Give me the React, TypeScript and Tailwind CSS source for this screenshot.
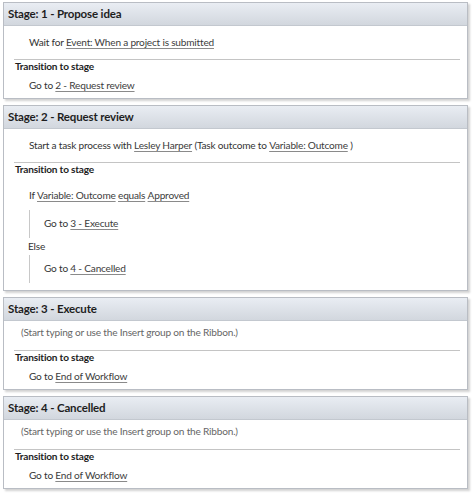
import type { ReactNode } from 'react'

const font = { fontFamily: 'Lato, "Open Sans", Arial, sans-serif' }

function Link({ children }: { children: ReactNode }) {
  return <span className="underline decoration-[#8a8a8a] underline-offset-2 text-[#3c3c3c]">{children}</span>
}

function Card({ title, children }: { title: string; children: ReactNode }) {
  return (
    <div className="w-[465px] border border-[#b9bdc4] bg-white shadow-[2px_2px_2px_rgba(0,0,0,0.18)]">
      <div className="h-[23px] border-b border-[#c3c8cf] bg-gradient-to-b from-[#e9edf3] to-[#d2d7de] flex items-center pl-[4px] text-[11.5px] tracking-[-0.15px] font-bold text-[#1e1e1e]">
        {title}
      </div>
      {children}
    </div>
  )
}

function Divider() {
  return <div className="ml-[10px] mr-[7px] h-px bg-[#c4c4c4]" />
}

function TransitionLabel() {
  return (
    <div className="h-[14px] flex items-center pl-[11px] font-bold text-[#1e1e1e]">
      Transition to stage
    </div>
  )
}

function GoTo({ target }: { target: string }) {
  return (
    <div className="h-[24px] flex items-center pl-[25px]">
      Go to&nbsp;<Link>{target}</Link>
    </div>
  )
}

function Placeholder() {
  return (
    <>
      <div className="h-[24px] flex items-center pl-[17px] text-[#666]">
        (Start typing or use the Insert group on the Ribbon.)
      </div>
      <div className="h-[5px]" />
    </>
  )
}

export default function App() {
  return (
    <div className="min-h-screen bg-white pt-[2px] pl-[3px] text-[10.1px] tracking-[-0.2px] text-[#333]" style={font}>
      <div className="flex flex-col gap-[6px]">
        <Card title="Stage: 1 - Propose idea">
          <div className="h-[33px] flex items-center pl-[25px]">
            Wait for&nbsp;<Link>Event: When a project is submitted</Link>
          </div>
          <Divider />
          <TransitionLabel />
          <GoTo target="2 - Request review" />
        </Card>

        <Card title="Stage: 2 - Request review">
          <div className="h-[33px] flex items-center pl-[25px]">
            Start a task process with&nbsp;<Link>Lesley Harper</Link>&nbsp;(Task outcome to&nbsp;
            <Link>Variable: Outcome</Link>&nbsp;)
          </div>
          <Divider />
          <TransitionLabel />
          <div className="mt-[9px] h-[20px] flex items-center pl-[25px]">
            If&nbsp;<Link>Variable: Outcome</Link>&nbsp;<Link>equals</Link>&nbsp;<Link>Approved</Link>
          </div>
          <div className="mt-[4px] ml-[25px] h-[28px] border-l border-[#c8c8c8] flex items-center pl-[14px]">
            Go to&nbsp;<Link>3 - Execute</Link>
          </div>
          <div className="h-[17px] flex items-center pl-[24px]">Else</div>
          <div className="ml-[25px] h-[28px] border-l border-[#c8c8c8] flex items-center pl-[14px]">
            Go to&nbsp;<Link>4 - Cancelled</Link>
          </div>
          <div className="h-[7px]" />
        </Card>

        <Card title="Stage: 3 - Execute">
          <Placeholder />
          <Divider />
          <TransitionLabel />
          <GoTo target="End of Workflow" />
        </Card>

        <Card title="Stage: 4 - Cancelled">
          <Placeholder />
          <Divider />
          <TransitionLabel />
          <GoTo target="End of Workflow" />
        </Card>
      </div>
    </div>
  )
}
